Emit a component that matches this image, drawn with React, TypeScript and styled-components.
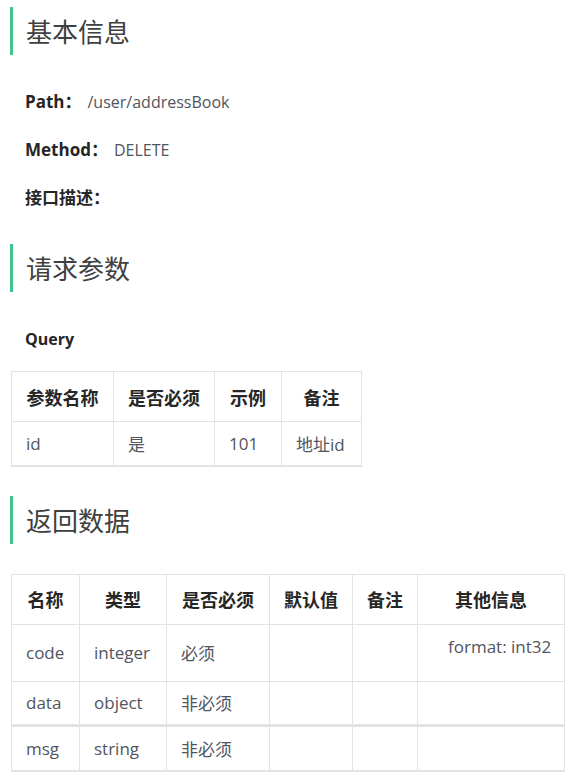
import React from "react";
import styled, { createGlobalStyle } from "styled-components";

const Global = createGlobalStyle`
  html, body { margin: 0; padding: 0; background: #fff; }
  body {
    font-family: "Open Sans", "Noto Sans CJK SC", sans-serif;
    color: #595959;
  }
`;

const Page = styled.div`
  padding: 7px 0 0 10px;
  width: 565px;
  box-sizing: border-box;
`;

const SectionTitle = styled.h2<{ $mt?: number }>`
  margin: ${(p) => p.$mt ?? 0}px 0 0 0;
  height: 48px;
  line-height: 48px;
  border-left: 3px solid #3fc48d;
  padding-left: 13px;
  font-size: 26px;
  font-weight: 400;
  color: #404040;
  font-family: "Noto Sans CJK SC", sans-serif;
`;

const InfoList = styled.div`
  margin-top: 35px;
  padding-left: 15px;
  display: flex;
  flex-direction: column;
  gap: 24px;
`;

const InfoRow = styled.div`
  height: 24px;
  line-height: 24px;
  font-size: 16px;
  display: flex;
  align-items: center;
`;

const Label = styled.span`
  font-weight: 700;
  color: #262626;
  margin-right: 6px;
  font-size: 17px;
`;

const Value = styled.span`
  color: #505560;
`;

const SubTitle = styled.div`
  margin-top: 35px;
  padding-left: 15px;
  height: 24px;
  line-height: 24px;
  font-size: 16px;
  font-weight: 700;
  color: #262626;
`;

const Table = styled.table<{ $mt: number; $w: number }>`
  margin: ${(p) => p.$mt}px 0 0 1px;
  border-collapse: collapse;
  table-layout: fixed;
  width: ${(p) => p.$w}px;
  font-size: 17px;
  border: 1px solid #e3e3e3;
  border-bottom-width: 2px;
`;

const Col = styled.col<{ $w: number }>`
  width: ${(p) => p.$w}px;
`;

const Th = styled.th`
  height: 49px;
  padding: 0;
  border: 1px solid #e3e3e3;
  font-weight: 700;
  color: #262626;
  text-align: center;
  white-space: nowrap;
  font-size: 18px;
`;

const Tr = styled.tr<{ $h: number; $thick?: boolean }>`
  height: ${(p) => p.$h}px;
  ${(p) => (p.$thick ? "border-top: 3px solid #e3e3e3;" : "")}
`;

const Td = styled.td<{ $indent?: number; $raise?: number }>`
  padding: 0 0 ${(p) => p.$raise ?? 0}px ${(p) => p.$indent ?? 14}px;
  border: 1px solid #e3e3e3;
  color: #505560;
  white-space: nowrap;
`;

const queryHead = ["参数名称", "是否必须", "示例", "备注"];
const queryWidths = [102, 101, 67, 80];

const respHead = ["名称", "类型", "是否必须", "默认值", "备注", "其他信息"];
const respWidths = [68, 87, 103, 83, 65, 147];

const respRows = [
  { name: "code", type: "integer", req: "必须", other: "format: int32", h: 57 },
  { name: "data", type: "object", req: "非必须", other: "", h: 44 },
  { name: "msg", type: "string", req: "非必须", other: "", h: 46, thick: true },
];

export default function App() {
  return (
    <>
      <Global />
      <Page>
        <SectionTitle>基本信息</SectionTitle>
        <InfoList>
          <InfoRow>
            <Label>Path：</Label>
            <Value>/user/addressBook</Value>
          </InfoRow>
          <InfoRow>
            <Label>Method：</Label>
            <Value>DELETE</Value>
          </InfoRow>
          <InfoRow>
            <Label>接口描述：</Label>
          </InfoRow>
        </InfoList>

        <SectionTitle $mt={34}>请求参数</SectionTitle>
        <SubTitle>Query</SubTitle>
        <Table $mt={20} $w={350}>
          <colgroup>
            {queryWidths.map((w, i) => (
              <Col key={i} $w={w} />
            ))}
          </colgroup>
          <thead>
            <tr>
              {queryHead.map((h) => (
                <Th key={h}>{h}</Th>
              ))}
            </tr>
          </thead>
          <tbody>
            <Tr $h={44}>
              <Td>id</Td>
              <Td>是</Td>
              <Td>101</Td>
              <Td>地址id</Td>
            </Tr>
          </tbody>
        </Table>

        <SectionTitle $mt={29}>返回数据</SectionTitle>
        <Table $mt={30} $w={553}>
          <colgroup>
            {respWidths.map((w, i) => (
              <Col key={i} $w={w} />
            ))}
          </colgroup>
          <thead>
            <tr>
              {respHead.map((h) => (
                <Th key={h}>{h}</Th>
              ))}
            </tr>
          </thead>
          <tbody>
            {respRows.map((r) => (
              <Tr key={r.name} $h={r.h} $thick={r.thick}>
                <Td>{r.name}</Td>
                <Td>{r.type}</Td>
                <Td>{r.req}</Td>
                <Td></Td>
                <Td></Td>
                <Td $indent={30} $raise={12}>
                  {r.other}
                </Td>
              </Tr>
            ))}
          </tbody>
        </Table>
      </Page>
    </>
  );
}
